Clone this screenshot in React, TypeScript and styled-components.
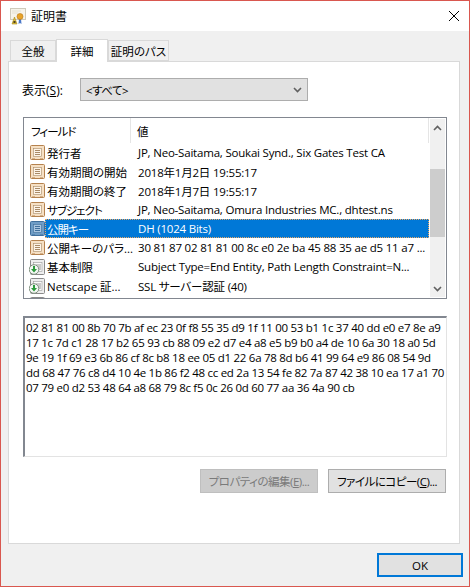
import styled, { createGlobalStyle } from "styled-components"

const GlobalStyle = createGlobalStyle`
	html, body {
		margin: 0;
		padding: 0;
		background: #f0f0f0;
	}

	body {
		font-family: "Open Sans", "Noto Sans CJK JP", sans-serif;
		font-size: 11.5px;
		font-feature-settings: "palt";
		color: #000;
	}
`

const FIELDS = [
	{ name: "発行者", value: "JP, Neo-Saitama, Soukai Synd., Six Gates Test CA", kind: "doc" },
	{ name: "有効期間の開始", value: "2018年1月2日 19:55:17", kind: "doc" },
	{ name: "有効期間の終了", value: "2018年1月7日 19:55:17", kind: "doc" },
	{ name: "サブジェクト", value: "JP, Neo-Saitama, Omura Industries MC., dhtest.ns", kind: "doc", tight: true },
	{ name: "公開キー", value: "DH (1024 Bits)", kind: "doc", selected: true, tight: true },
	{ name: "公開キーのパラ...", value: "30 81 87 02 81 81 00 8c e0 2e ba 45 88 35 ae d5 11 a7 ...", kind: "doc" },
	{ name: "基本制限", value: "Subject Type=End Entity, Path Length Constraint=N...", kind: "ext" },
	{ name: "Netscape 証...", value: "SSL サーバー認証 (40)", kind: "ext" },
	{ name: "", value: "", kind: "ext" }
]

const HEX_LINES = [
	"02 81 81 00 8b 70 7b af ec 23 0f f8 55 35 d9 1f 11 00 53 b1 1c 37 40 dd e0 e7 8e a9",
	"17 1c 7d c1 28 17 b2 65 93 cb 88 09 e2 d7 e4 a8 e5 b9 b0 a4 de 10 6a 30 18 a0 5d",
	"9e 19 1f 69 e3 6b 86 cf 8c b8 18 ee 05 d1 22 6a 78 8d b6 41 99 64 e9 86 08 54 9d",
	"dd 68 47 76 c8 d4 10 4e 1b 86 f2 48 cc ed 2a 13 54 fe 82 7a 87 42 38 10 ea 17 a1 70",
	"07 79 e0 d2 53 48 64 a8 68 79 8c f5 0c 26 0d 60 77 aa 36 4a 90 cb"
]

const CertIcon = () => (
	<svg width="17" height="17" viewBox="0 0 17 17">
		<rect x="1.5" y="0.5" width="15" height="11" fill="#f6f3ea" stroke="#cfcabb" />
		<path d="M3 3h9M3 5h6" stroke="#e4e0d2" />
		<path d="M3 16l2.5-7 2.5 7z" fill="#dcbc3a" stroke="#a88a1a" strokeWidth="0.6" />
		<rect x="4.5" y="13" width="2" height="2" fill="#4a4020" />
		<path d="M10 11l-.5 5 1.5-1 1.5 1-.5-5z" fill="#4a78c8" />
		<circle cx="11" cy="8.5" r="3" fill="#e8a32a" stroke="#b9781a" strokeWidth="0.6" />
	</svg>
)

const DocIcon = ({ selected }: { selected?: boolean }) => {
	const edge = selected ? "#3f6f9c" : "#b5824e"
	const fill = selected ? "#6f9dc6" : "#f6e0c4"
	const paper = selected ? "#a9c6e0" : "#fdf4e8"
	const line = selected ? "#3f6f9c" : "#a98a66"

	return (
		<svg width="15" height="15" viewBox="0 0 15 15">
			<rect x="0.5" y="0.5" width="14" height="14" rx="1" fill={fill} stroke={edge} />
			<rect x="3.5" y="3.5" width="8" height="8" fill={paper} stroke={line} strokeWidth="0.6" />
			<path d="M5 5.5h5M5 7.5h5M5 9.5h5" stroke={line} />
			<path d="M2 14h3M10 14h3" stroke={edge} />
		</svg>
	)
}

const ExtIcon = () => (
	<svg width="16" height="16" viewBox="0 0 16 16">
		<rect x="1.5" y="0.5" width="14" height="15" rx="1" fill="#eeeeee" stroke="#8a8a8a" />
		<rect x="4.5" y="3.5" width="8.5" height="9" fill="#fafafa" stroke="#9a9a9a" strokeWidth="0.6" />
		<path d="M7 6h5M9 8h3M9 10h3" stroke="#9a9a9a" />
		<circle cx="5" cy="10.5" r="4.8" fill="#f4f8f4" stroke="#7d8f7d" />
		<path d="M4 7h2v3h2l-3 3.4-3-3.4h2z" fill="#2c9a3c" />
	</svg>
)

const Chevron = ({ up }: { up?: boolean }) => (
	<svg width="9" height="6" viewBox="0 0 9 6">
		<path d={up ? "M1 5l3.5-3.5L8 5" : "M1 1l3.5 3.5L8 1"} fill="none" stroke="#606060" strokeWidth="1.6" />
	</svg>
)

const App = () => (
	<Window>
		<GlobalStyle />
		<TitleBar>
			<CertIcon />
			<TitleText>証明書</TitleText>
			<CloseIcon width="10" height="10" viewBox="0 0 10 10">
				<path d="M0 0l10 10M10 0L0 10" stroke="#000" strokeWidth="1" fill="none" />
			</CloseIcon>
		</TitleBar>
		<Body>
			<Tabs>
				<Tab $width={46}>全般</Tab>
				<Tab $width={52} $active>
					詳細
				</Tab>
				<Tab $width={61}>証明のパス</Tab>
			</Tabs>
			<Panel>
				<ShowRow>
					<ShowLabel>
						表示(<u>S</u>):
					</ShowLabel>
					<Select>
						<span>&lt;すべて&gt;</span>
						<Chevron />
					</Select>
				</ShowRow>
				<ListBox>
					<ListMain>
						<ListHeader>
							<NameHeader>フィールド</NameHeader>
							<ValueHeader>値</ValueHeader>
						</ListHeader>
						{FIELDS.map((field, i) => (
							<Row key={i}>
								<IconCell $ext={field.kind === "ext"}>
									{field.kind === "doc" ? <DocIcon selected={field.selected} /> : <ExtIcon />}
								</IconCell>
								<RowContent $selected={field.selected}>
									<NameCell $tight={field.tight}>{field.name}</NameCell>
									<ValueCell>{field.value}</ValueCell>
								</RowContent>
							</Row>
						))}
					</ListMain>
					<ScrollBar>
						<ScrollButton>
							<Chevron up />
						</ScrollButton>
						<ScrollTrack>
							<ScrollThumb />
						</ScrollTrack>
						<ScrollButton>
							<Chevron />
						</ScrollButton>
					</ScrollBar>
				</ListBox>
				<HexBox>
					{HEX_LINES.map(line => (
						<div key={line}>{line}</div>
					))}
				</HexBox>
				<ButtonRow>
					<ActionButton disabled>
						プロパティの編集(<u>E</u>)...
					</ActionButton>
					<ActionButton>
						ファイルにコピー(<u>C</u>)...
					</ActionButton>
				</ButtonRow>
			</Panel>
			<Footer>
				<OkButton>OK</OkButton>
			</Footer>
		</Body>
	</Window>
)

export default App

const Window = styled.div`
	box-sizing: border-box;
	display: flex;
	flex-direction: column;
	width: 470px;
	height: 587px;
	border: 1px solid #d9574f;
	overflow: hidden;
`

const TitleBar = styled.div`
	display: flex;
	align-items: center;
	flex: none;
	height: 30px;
	padding: 0 10px 0 8px;
	background: #fff;
`

const TitleText = styled.span`
	flex: 1;
	margin-left: 5px;
	padding-bottom: 1px;
	font-size: 12px;
`

const CloseIcon = styled.svg`
	flex: none;
`

const Body = styled.div`
	display: flex;
	flex-direction: column;
	flex: 1;
	padding: 0 9px 0 7px;
	background: #f0f0f0;
`

const Tabs = styled.div`
	display: flex;
	align-items: flex-end;
	flex: none;
	height: 30px;
	padding-left: 2px;
`

const Tab = styled.div<{ $active?: boolean; $width: number }>`
	position: relative;
	display: flex;
	align-items: center;
	justify-content: center;
	box-sizing: border-box;
	width: ${p => p.$width}px;
	height: ${p => (p.$active ? 23 : 21)}px;
	margin-bottom: ${p => (p.$active ? -1 : 0)}px;
	border: 1px solid #d9d9d9;
	border-bottom: ${p => (p.$active ? "none" : "1px solid #d9d9d9")};
	background: ${p => (p.$active ? "#fff" : "#f0f0f0")};
	z-index: ${p => (p.$active ? 1 : 0)};
	white-space: nowrap;
	font-size: 11.5px;
`

const Panel = styled.div`
	box-sizing: border-box;
	display: flex;
	flex-direction: column;
	flex: none;
	height: 483px;
	padding: 16px 13px 0 14px;
	border: 1px solid #d9d9d9;
	background: #fff;
`

const ShowRow = styled.div`
	display: flex;
	align-items: center;
	height: 23px;
`

const ShowLabel = styled.span`
	width: 58px;
	margin-left: -1px;
	font-size: 12px;
`

const Select = styled.div`
	box-sizing: border-box;
	display: flex;
	align-items: center;
	justify-content: space-between;
	width: 228px;
	height: 23px;
	padding: 0 5px;
	border: 1px solid #adadad;
	background: #e1e1e1;
	letter-spacing: -0.5px;
`

const ListBox = styled.div`
	box-sizing: border-box;
	display: flex;
	width: 424px;
	height: 182px;
	margin-top: 16px;
	border: 1px solid #828790;
	overflow: hidden;
`

const ListMain = styled.div`
	flex: 1;
	min-width: 0;
	overflow: hidden;
`

const ListHeader = styled.div`
	display: flex;
	height: 25px;
`

const NameHeader = styled.div`
	display: flex;
	align-items: center;
	box-sizing: border-box;
	width: 107px;
	padding-left: 7px;
	border-right: 1px solid #e5e5e5;
	letter-spacing: -1px;
`

const ValueHeader = styled.div`
	display: flex;
	align-items: center;
	flex: 1;
	padding-left: 6px;
	border-right: 1px solid #e5e5e5;
`

const Row = styled.div`
	display: flex;
	align-items: center;
	height: 19px;
`

const IconCell = styled.div<{ $ext?: boolean }>`
	box-sizing: border-box;
	display: flex;
	align-items: center;
	flex: none;
	width: 21px;
	padding-left: ${p => (p.$ext ? 5 : 6)}px;
`

const RowContent = styled.div<{ $selected?: boolean }>`
	box-sizing: border-box;
	display: flex;
	align-items: center;
	flex: 1;
	min-width: 0;
	height: 19px;
	background: ${p => (p.$selected ? "#0078d7" : "transparent")};
	color: ${p => (p.$selected ? "#fff" : "#000")};
	outline: ${p => (p.$selected ? "1px dotted #e8a868" : "none")};
	outline-offset: -1px;
`

const NameCell = styled.span<{ $tight?: boolean }>`
	flex: none;
	width: 93px;
	padding-left: 2px;
	box-sizing: border-box;
	letter-spacing: ${p => (p.$tight ? -1 : 0)}px;
	white-space: nowrap;
`

const ValueCell = styled.span`
	letter-spacing: -0.2px;
	white-space: nowrap;
`

const ScrollBar = styled.div`
	display: flex;
	flex-direction: column;
	flex: none;
	width: 15px;
	margin: 1px;
	background: #f0f0f0;
`

const ScrollButton = styled.div`
	display: flex;
	align-items: center;
	justify-content: center;
	flex: none;
	height: 17px;
`

const ScrollTrack = styled.div`
	flex: 1;
	padding-top: 33px;
`

const ScrollThumb = styled.div`
	height: 68px;
	background: #cdcdcd;
`

const HexBox = styled.div`
	box-sizing: border-box;
	width: 424px;
	height: 141px;
	margin-top: 17px;
	padding: 2px 1px;
	border-style: solid;
	border-color: #828790 #e3e3e3 #e3e3e3 #828790;
	border-width: 2px 1px 1px 2px;
	line-height: 15px;
	letter-spacing: -0.28px;
	white-space: nowrap;
`

const ButtonRow = styled.div`
	display: flex;
	justify-content: flex-end;
	gap: 10px;
	width: 423px;
	margin-top: 12px;
`

const ActionButton = styled.div<{ disabled?: boolean }>`
	box-sizing: border-box;
	display: flex;
	align-items: center;
	justify-content: center;
	width: 118px;
	height: 24px;
	border: 1px solid ${p => (p.disabled ? "#bfbfbf" : "#adadad")};
	background: ${p => (p.disabled ? "#cccccc" : "#e1e1e1")};
	color: ${p => (p.disabled ? "#7a7a7a" : "#000")};
	letter-spacing: -0.5px;
	white-space: nowrap;
`

const Footer = styled.div`
	display: flex;
	justify-content: flex-end;
	flex: none;
	padding-top: 9px;
	margin-right: -3px;
`

const OkButton = styled.div`
	box-sizing: border-box;
	display: flex;
	align-items: center;
	justify-content: center;
	width: 86px;
	height: 24px;
	border: 2px solid #0078d7;
	background: #e1e1e1;
`
